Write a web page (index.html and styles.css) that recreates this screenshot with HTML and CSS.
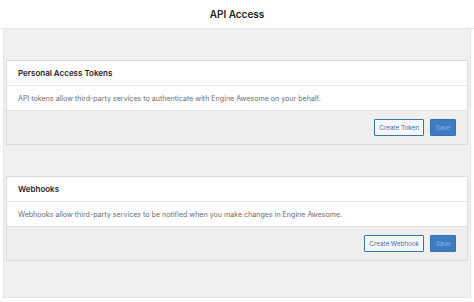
FILE: index.html
```html
<!DOCTYPE html>
<html>
<head>
<meta charset="utf-8">
<link rel="stylesheet" href="styles.css">
</head>
<body>
<header class="topbar"><h1 class="title">API Access</h1></header>
<main class="content">
  <section class="card">
    <div class="card-head">Personal Access Tokens</div>
    <div class="card-body">API tokens allow third-party services to authenticate with Engine Awesome on your behalf.</div>
    <div class="card-foot">
      <button class="btn btn-outline">Create Token</button>
      <button class="btn btn-primary">Save</button>
    </div>
  </section>
  <section class="card">
    <div class="card-head">Webhooks</div>
    <div class="card-body">Webhooks allow third-party services to be notified when you make changes in Engine Awesome.</div>
    <div class="card-foot">
      <button class="btn btn-outline">Create Webhook</button>
      <button class="btn btn-primary">Save</button>
    </div>
  </section>
</main>
</body>
</html>
```
FILE: styles.css
```css
html, body {
  margin: 0;
  padding: 0;
  background: #ffffff;
  font-family: Inter, "Noto Sans", sans-serif;
  color: #1e1e1e;
}
.topbar {
  height: 28px;
  display: flex;
  align-items: center;
  justify-content: center;
  border-bottom: 1px solid #e4e4e4;
}
.title {
  margin: 0;
  font-size: 10px;
  font-weight: 600;
  color: #1e1e1e;
}
.content {
  margin: 0 3px;
  height: 269px;
  box-sizing: border-box;
  background: #f0f0f0;
  border-left: 1px solid #e6e6e6;
  border-right: 1px solid #e6e6e6;
  border-bottom: 1px solid #e6e6e6;
  padding: 31px 2px 0 2px;
  display: flex;
  flex-direction: column;
  gap: 31px;
}
.card {
  border: 1px solid #dcdcdc;
  background: #fff;
}
.card-head {
  height: 24px;
  display: flex;
  align-items: center;
  padding: 0 11px;
  font-size: 8px;
  font-weight: 600;
  border-bottom: 1px solid #e8e8e8;
}
.card-body {
  height: 24px;
  display: flex;
  align-items: center;
  padding: 0 11px;
  font-size: 7.1px;
  color: #6e6e6e;
}
.card-foot {
  height: 34px;
  box-sizing: border-box;
  background: #efefef;
  border-top: 1px solid #e2e2e2;
  display: flex;
  align-items: center;
  justify-content: flex-end;
  gap: 6px;
  padding: 0 11px;
}
.btn {
  height: 17px;
  font-family: inherit;
  font-size: 6.3px;
  padding: 0 4px;
  border-radius: 1px;
  cursor: pointer;
}
.btn-outline {
  background: #f6f7f7;
  border: 1px solid #3873b3;
  color: #3873b3;
}
.btn-primary {
  background: #3c7dc3;
  border: 1px solid #3572b5;
  color: #8db3dd;
  width: 26px;
  padding: 0;
}
```
